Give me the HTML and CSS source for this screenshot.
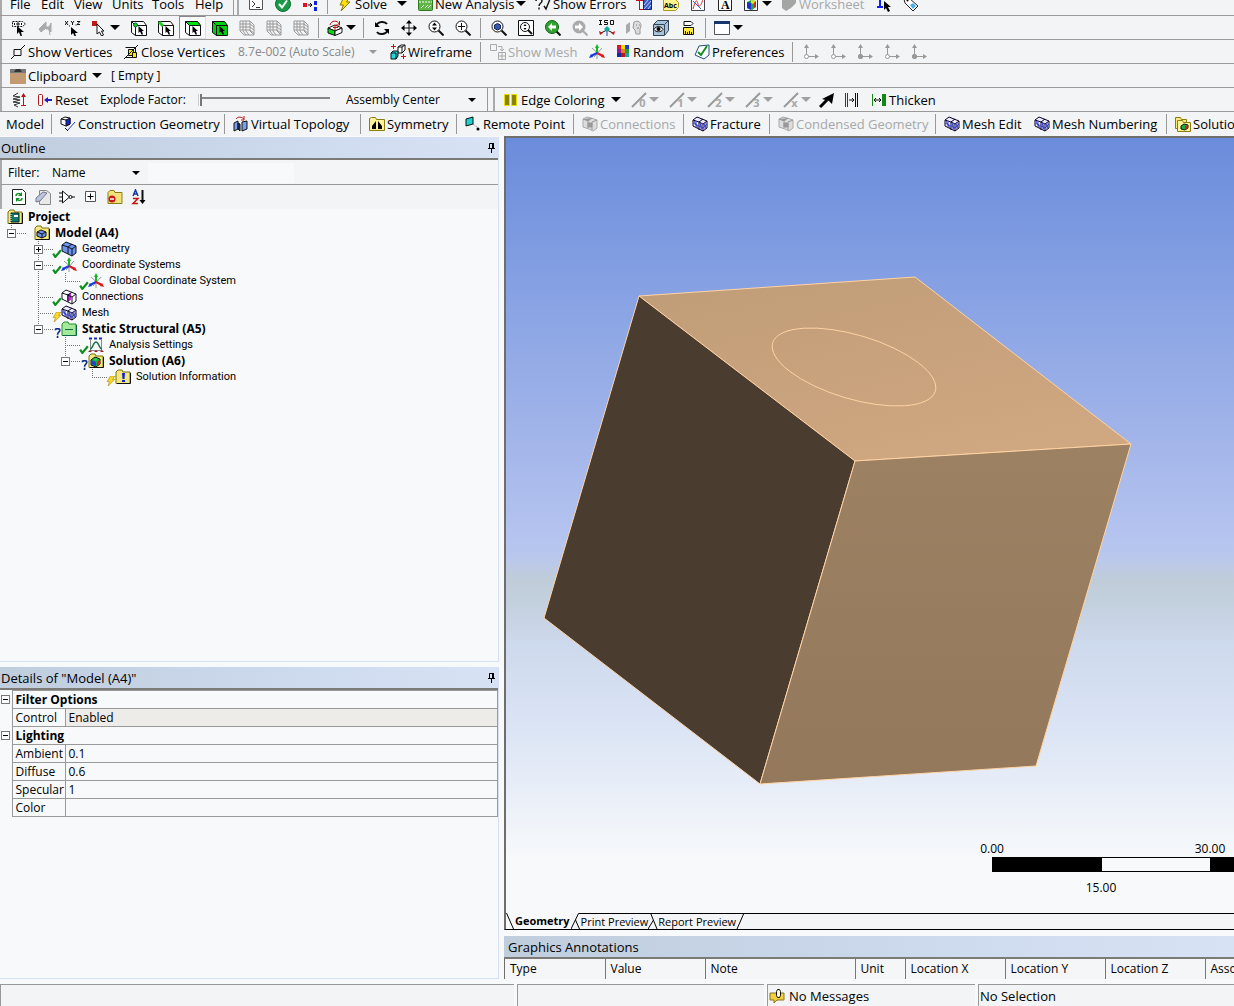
FILE: index.html
```html
<!DOCTYPE html>
<html lang="en">
<head>
    <meta charset="UTF-8">
    <meta name="viewport" content="width=device-width, initial-scale=1.0">
    <title>Mechanical</title>
    <link rel="stylesheet" href="styles.css">
</head>
<body>
    <!-- Icon set -->
    <svg class="sprite" width="0" height="0" aria-hidden="true">
        <symbol id="i-console" viewBox="0 0 16 16"><path d="M1.500 2.500h13v11h-13z" fill="#fff" stroke="#555"/><path d="M4 5l3 3-3 3M8 11.500h4" fill="none" stroke="#333"/></symbol>
        <symbol id="i-ok" viewBox="0 0 16 16"><circle cx="8" cy="8" r="7.500" fill="#1a9a48" stroke="#0b6c2e"/><path d="M4 8l3 3.500L12 4.500" fill="none" stroke="#fff" stroke-width="2"/></symbol>
        <symbol id="i-route" viewBox="0 0 16 16"><path d="M1 7h4v4H1z" fill="#e01020"/><path d="M6 9h4M8 7l2 2-2 2" fill="none" stroke="#000"/><path d="M12 5h3v4h-3zM12 11h3v4h-3z" fill="#1020e0"/></symbol>
        <symbol id="i-bolt" viewBox="0 0 16 16"><path d="M7 1h6L9.500 6H13L4 15l2.500-6H3z" fill="#ffe400" stroke="#8a7400"/></symbol>
        <symbol id="i-analysis" viewBox="0 0 16 16"><rect x="1.500" y="2.500" width="14" height="12" rx="1" fill="#5fb548" stroke="#2d7a1c"/><path d="M2 6h13" stroke="#fff" stroke-dasharray="2 1"/><path d="M4 12l3-3M8 12l3-3M11 12l3-3" stroke="#e6f8df"/></symbol>
        <symbol id="i-errors" viewBox="0 0 16 16"><path d="M1 5c0-3 6-3 6 0 0 2-3 2-3 5M4 11.500v2M9 10l2 3 4-10" fill="none" stroke="#111" stroke-width="1.400"/></symbol>
        <symbol id="i-section" viewBox="0 0 16 16"><path d="M0 4.500h7M3.500 4v9M3 13.500h6" stroke="#c01020" fill="none"/><path d="M7.500 3.500h8v10h-8z" fill="#3c5ac8" stroke="#102080"/><path d="M8 13l7-8M8 9l4-5M12 13l3-4" stroke="#bcd0ff"/></symbol>
        <symbol id="i-abc" viewBox="0 0 16 16"><path d="M.5 3.500h12l3 3v5l-3 3H.5z" fill="#fff38a" stroke="#b09a20"/><text x="1" y="12" class="glyph">Abc</text></symbol>
        <symbol id="i-figure" viewBox="0 0 16 16"><path d="M1.500 1.500h13v13h-13z" fill="#fff" stroke="#445"/><path d="M3 13C6 2 7 4 8 8s3 2 5-5" fill="none" stroke="#d03030"/><path d="M3 5l8 8" stroke="#4060d0"/></symbol>
        <symbol id="i-image" viewBox="0 0 16 16"><path d="M1.500 1.500h13v13h-13z" fill="#fff" stroke="#222"/><text x="4" y="13" class="glyph glyph-a">A</text></symbol>
        <symbol id="i-contour" viewBox="0 0 16 16"><path d="M1.500 1.500h13v13h-13z" fill="#fff" stroke="#333"/><path d="M4 6l4-2 5 1v6l-4 3-5-2z" fill="#18a848"/><path d="M4 6l4 1v7l-4-2z" fill="#2030d0"/><path d="M8 4l5 1-3 3-2-1z" fill="#e8e020"/><path d="M11 7l2-2v6l-2 1z" fill="#e02020"/></symbol>
        <symbol id="i-worksheet" viewBox="0 0 16 16"><path d="M1 2h14v5l-5 5-5 3-4-3z" fill="#a5a5a5"/></symbol>
        <symbol id="i-onepick" viewBox="0 0 16 16"><path d="M2 3l2-1v9M1 11h6" fill="none" stroke="#1020ff" stroke-width="2"/><path d="M8 5v9l2-2 2 4 2-1-2-4h3z"/></symbol>
        <symbol id="i-tag" viewBox="0 0 16 16"><path d="M1 3l5-1 9 8-5 5-8-8z" fill="#fff" stroke="#222"/><path d="M7 9l3-2 3 3-3 3z" fill="#48b0f0"/><circle cx="4.500" cy="4.500" r="1"/></symbol>

        <symbol id="i-pick" viewBox="0 0 16 16"><path d="M1.500 1.500h10l3 2.500-3 2.500h-10z" fill="#fff" stroke="#111" stroke-dasharray="2 1"/><path d="M3.500 3v2M6 3h2v2H6zM10.500 3v2" stroke="#111" fill="none"/><path d="M6 6v8l2-2 1.500 4h1.500l-1-4h3z"/></symbol>
        <symbol id="i-pickoff" viewBox="0 0 16 16"><path d="M1 9l7-7v5h3l2-4v9l-3-3H8v-1l-5 4zM11 9l1 6" fill="#aaa" stroke="#aaa"/></symbol>
        <symbol id="i-xyz" viewBox="0 0 16 16"><path d="M0 1l3 4M3 1L0 5M6 1l1.500 2L9 1M7.500 3v2M12 1.500h3l-3 3h3" fill="none" stroke="#111"/><path d="M4 6h1M10.500 5h1" stroke="#111"/><path d="M6 7v8l2-2 1.500 3H11l-1-3h3z"/></symbol>
        <symbol id="i-select" viewBox="0 0 16 16"><path d="M1 1h5v5H1z" fill="#c01818"/><path d="M6 4v10l2.500-2 2 4 2-1-2-4H13z" fill="#fff" stroke="#111"/></symbol>
        <symbol id="i-vertex" viewBox="0 0 16 16"><use href="#i-box"/><circle cx="4.500" cy="5" r="2" fill="#1ad020" stroke="#064"/><use href="#i-arrow"/></symbol>
        <symbol id="i-edge" viewBox="0 0 16 16"><use href="#i-box"/><path d="M1 2l4 4" stroke="#1ad020" stroke-width="3"/><use href="#i-arrow"/></symbol>
        <symbol id="i-face" viewBox="0 0 16 16"><use href="#i-box"/><path d="M.5 1.500h12l3 4h-11z" fill="#00e010" stroke="#111"/><use href="#i-arrow"/></symbol>
        <symbol id="i-body" viewBox="0 0 16 16"><path d="M.5 1.500h12l3 4v10h-11l-4-3z" fill="#00d010" stroke="#111"/><path d="M.5 1.500l4 4h11M4.500 5.500v10" fill="none" stroke="#111"/><use href="#i-arrow"/></symbol>
        <symbol id="i-box" viewBox="0 0 16 16"><path d="M.5 1.500h12l3 4v10h-11l-4-3z" fill="#fff" stroke="#111"/><path d="M.5 1.500l4 4h11M4.500 5.500v10" fill="none" stroke="#111"/></symbol>
        <symbol id="i-arrow" viewBox="0 0 16 16"><path d="M7.500 6v7l1.500-1.500 1.500 3h1.500l-1-3.500h2z"/></symbol>
        <symbol id="i-mesh-off" viewBox="0 0 16 16"><path d="M1 1h10l4 4v10H5l-4-4z" fill="#f4f4f4" stroke="#999"/><path d="M1 4h10l4 3M1 7h10l4 3M1 10h10l4 3M4 1v10l3 4M7 1v10l3 4M11 1v10l4 4" fill="none" stroke="#999"/></symbol>
        <symbol id="i-view" viewBox="0 0 16 16"><path d="M1 8l7-3 7 3-7 3z" fill="#fff" stroke="#111"/><path d="M1 8l7 3v4.500L1 13z" fill="#00d818" stroke="#111"/><path d="M15 8l-7 3v4.500l7-3z" fill="#fff" stroke="#111"/><path d="M3 5c1-5 8-5 9-1M12.500 1v4H9M8 5v5M6 7.500h5" fill="none" stroke="#c01010"/></symbol>
        <symbol id="i-rotate" viewBox="0 0 16 16"><path d="M2 6c2-5 9-5 11-2M14 10c-2 5-9 5-11 2" fill="none" stroke="#111" stroke-width="2"/><path d="M1 2v5h5zM15 14V9h-5z"/></symbol>
        <symbol id="i-pan" viewBox="0 0 16 16"><path d="M8 2v12M2 8h12" stroke="#111"/><path d="M8 0l3 3.500H5zM8 16l3-3.500H5zM0 8l3.500-3v6zM16 8l-3.500-3v6z"/></symbol>
        <symbol id="i-lens" viewBox="0 0 16 16"><circle cx="6.500" cy="6.500" r="5.500" fill="#fff" stroke="#111"/><path d="M10.500 10.500l5 5" stroke="#111" stroke-width="2"/></symbol>
        <symbol id="i-zoom" viewBox="0 0 16 16"><use href="#i-lens"/><path d="M6.500 2.500l2.500 3H4zM6.500 10.500l2.500-3H4z"/></symbol>
        <symbol id="i-zoomin" viewBox="0 0 16 16"><use href="#i-lens"/><path d="M3 6.500h7M6.500 3v7" stroke="#111"/></symbol>
        <symbol id="i-fit" viewBox="0 0 16 16"><use href="#i-lens"/><path d="M3.500 5l3-1.500 3 1.500v3.500l-3 1.500-3-1.500z" fill="#3458b8" stroke="#102050"/></symbol>
        <symbol id="i-zoombox" viewBox="0 0 16 16"><path d="M.5.500h15v15H.5z" fill="#fff" stroke="#111"/><circle cx="7" cy="7" r="4.500" fill="#fff" stroke="#111"/><path d="M10 10l4 4" stroke="#111" stroke-width="2"/><path d="M7 4l1.500 2h-3zM7 10l1.500-2h-3z"/></symbol>
        <symbol id="i-back" viewBox="0 0 16 16"><path d="M10.500 10.500l5 5" stroke="#111" stroke-width="2"/><circle cx="7" cy="7" r="6.500" fill="#30a030" stroke="#176017"/><path d="M3 7l4-4v2.500h4v3H7V11z" fill="#fff"/></symbol>
        <symbol id="i-fwd" viewBox="0 0 16 16"><path d="M10.500 10.500l5 5" stroke="#aaa" stroke-width="2"/><circle cx="7" cy="7" r="6.500" fill="#aaa"/><path d="M11 7L7 3v2.500H3v3h4V11z" fill="#fff"/></symbol>
        <symbol id="i-iso" viewBox="0 0 16 16"><path d="M1.500 0v5M0 .5h3M0 4.500h3M9 .5H5.500v2H8.500v2H5M11.500.5h3v4h-3z" fill="none" stroke="#111"/><path d="M8 16V8" stroke="#1040c0"/><path d="M8 10l-6 3M8 10l6 3" stroke="#111"/><path d="M5 9l3-3 3 3-3 3z" fill="#10a8a0"/><path d="M0 11l4 2-3 2zM16 11l-4 2 3 2z" fill="#c01818"/></symbol>
        <symbol id="i-lookat" viewBox="0 0 16 16"><path d="M0 5l4-3v9l-4 3z" fill="#aaa"/><path d="M8 2c4-2 7 0 7 4l-1 3v5h-4l-1-4-2-2z" fill="#ddd" stroke="#999"/><path d="M10 5h1M13 5h1M11 8h2" stroke="#888"/></symbol>
        <symbol id="i-eye" viewBox="0 0 16 16"><path d="M.5 4.500l4-4h11v10l-4 5H.5z" fill="#a9c3dd" stroke="#345"/><path d="M11.500 15V4.500l4-4M1 4.500h10" fill="none" stroke="#345"/><path d="M1 9.500c2-4 7-4 9 0-2 3-7 3-9 0z" fill="#fff" stroke="#111"/><circle cx="5.500" cy="9" r="2"/></symbol>
        <symbol id="i-ruler" viewBox="0 0 16 16"><path d="M4 1.500h7l2 2-2 2H4z" fill="#fff" stroke="#111"/><path d="M3.500 7.500h10v7h-10z" fill="#ffe840" stroke="#111"/><path d="M5.500 11v3M7.500 12v2M9.500 11v3M11.500 12v2" stroke="#111"/></symbol>
        <symbol id="i-window" viewBox="0 0 16 16"><path d="M.5 1.500h15v13H.5z" fill="#fff" stroke="#555"/><path d="M0 1h16v3H0z" fill="#16366e"/></symbol>

        <symbol id="i-showv" viewBox="0 0 16 16"><path d="M4 5.500h7v6H4zM11 5l4-4M4 12l-3 3" fill="none" stroke="#111"/></symbol>
        <symbol id="i-closev" viewBox="0 0 16 16"><path d="M2.500 3.500h10v9M2 13.500h8" fill="none" stroke="#111"/><path d="M5.500 5.500h5v6h-5z" fill="#ffe800" stroke="#111"/><path d="M9.500 8.500h4v5h-4z" fill="#ffe800" stroke="#111"/><path d="M1 15L15 1" stroke="#111"/></symbol>
        <symbol id="i-wire" viewBox="0 0 16 16"><path d="M8 3l3-2h4v5l-3 3H8zM8 3h4v6M12 3l3-2" fill="#fff" stroke="#111"/><path d="M1 9l2-2h5v5l-2 3H1z" fill="#20d8e0" stroke="#111"/><path d="M1 9h5v6" fill="none" stroke="#111"/><path d="M3.500 0v5M1 2.500h5M13.500 10v5M11 12.500h5" stroke="#c01818"/></symbol>
        <symbol id="i-showmesh" viewBox="0 0 16 16"><path d="M.5.500h6v6h-6zM8 2.500h4v4M10 5l2 2 2-2M8.500 8.500h7v7h-7zM12 8v8M8 12h8" fill="none" stroke="#aaa"/></symbol>
        <symbol id="i-triad" viewBox="0 0 16 16"><path d="M3 4l10 9M13 4L5 13M8 9v6" stroke="#999"/><path d="M8 9V2" stroke="#10b820" stroke-width="2"/><path d="M8 0l2 4H6z" fill="#10b820"/><path d="M8 9l-6 3" stroke="#1838e0" stroke-width="2"/><path d="M0 14l2-4 2 3z" fill="#1838e0"/><path d="M8 9l6 3" stroke="#e01818" stroke-width="2"/><path d="M16 14l-2-4-2 3z" fill="#e01818"/></symbol>
        <symbol id="i-random" viewBox="0 0 16 16"><path d="M2 1h4v4H2z" fill="#d81830"/><path d="M6 1h4v4H6z" fill="#f0e000"/><path d="M10 1h4v4h-4z" fill="#2038e0"/><path d="M2 5h4v4H2z" fill="#901890"/><path d="M6 5h4v4H6z" fill="#e88020"/><path d="M10 5h4v4h-4z" fill="#20a030"/><path d="M2 9h4v4H2z" fill="#1828a0"/><path d="M6 9h4v4H6z" fill="#c01818"/><path d="M10 9h4v4h-4z" fill="#18a8a0"/></symbol>
        <symbol id="i-prefs" viewBox="0 0 16 16"><path d="M5 2l10-1v10l-5 4-9-4z" fill="#fff" stroke="#205080"/><path d="M4 8l3 3 6-9" fill="none" stroke="#109020" stroke-width="2"/></symbol>
        <symbol id="i-axes" viewBox="0 0 16 16"><path d="M3.500 13V2M4 12.500h10" stroke="#999" fill="none"/><path d="M3.500 0L6 4H1zM16 12.500L12 10v5z" fill="#999"/><circle cx="3.500" cy="12.500" r="2" fill="#fff" stroke="#999"/></symbol>
        <symbol id="i-axes-dot" viewBox="0 0 16 16"><use href="#i-axes"/><circle cx="3.500" cy="12.500" r="2.500" fill="#999"/></symbol>

        <symbol id="i-clip" viewBox="0 0 16 16"><path d="M0 2h16v14H0z" fill="#c49a72"/><path d="M0 1h16v4H0z" fill="#777"/><path d="M4 4l2-3h4l2 3z" fill="#333"/></symbol>
        <symbol id="i-spring" viewBox="0 0 16 16"><path d="M7 1L2 4l7 1-7 2 7 1-7 2 7 1-6 2 4 2" fill="none" stroke="#333"/><path d="M12.500 3v11M10 13.500h5" stroke="#b01818"/><path d="M12.500 1L15 5h-5z" fill="#b01818"/></symbol>
        <symbol id="i-reset" viewBox="0 0 16 16"><rect x="1.500" y="2.500" width="4" height="11" rx="1" fill="#fff" stroke="#b01818"/><path d="M9 8h6" stroke="#2020b0" stroke-width="2"/><path d="M7 8l4-3v6z" fill="#2020b0"/></symbol>
        <symbol id="i-coloring" viewBox="0 0 16 16"><path d="M1.500 2.500h5v11h-5zM8.500 2.500h5v11h-5z" fill="#8a8200" stroke="#e8e000"/></symbol>
        <symbol id="i-thick" viewBox="0 0 16 16"><path d="M1 15L15 1" stroke="#999" stroke-width="2"/></symbol>
        <symbol id="i-direct" viewBox="0 0 16 16"><path d="M1 15l7-7" stroke="#000" stroke-width="3"/><path d="M15 1l-2 11-3-3-7-2z"/></symbol>
        <symbol id="i-annot" viewBox="0 0 16 16"><path d="M1.500 1v14M3.500 1v14" stroke="#a01010"/><path d="M11.500 1v14M13.500 1v14M5 8h5M8 6l2 2-2 2" fill="none" stroke="#111"/></symbol>
        <symbol id="i-thicken" viewBox="0 0 16 16"><path d="M1.500 2v12" stroke="#108a10"/><path d="M11 2h4v12h-4z" fill="#108a10"/><path d="M3 8h7M5 6L3 8l2 2M8 6l2 2-2 2" fill="none" stroke="#111"/></symbol>

        <symbol id="i-constr" viewBox="0 0 16 16"><path d="M1 3l4-2 5 1v6l-4 2-5-2z" fill="#fff" stroke="#111"/><path d="M6 4l4-2v6l-4 2z" fill="#1828d8" stroke="#111"/><path d="M1 3l5 1" stroke="#111"/><path d="M7 15l8-9" stroke="#2038c0"/><path d="M5 12l3 3" stroke="#111"/></symbol>
        <symbol id="i-virtual" viewBox="0 0 16 16"><path d="M1 7l4-2v8l-4 2zM9 6l5-1v8l-5 2z" fill="#7aa0e8" stroke="#111"/><path d="M5 7l2 1v7l-2-2z" fill="#1a3fa0" stroke="#111"/><path d="M3 3c2-3 6-2 8 0M11 0v4H8" fill="none" stroke="#c01818"/></symbol>
        <symbol id="i-symm" viewBox="0 0 16 16"><path d="M.5 14.500v-12l2-1h4l1 2h8v11z" fill="#fff39a" stroke="#8a7c10"/><path d="M7 5v8H3v-3zM9 5v8h4v-3z"/></symbol>
        <symbol id="i-remote" viewBox="0 0 16 16"><path d="M1 3l7-2v7l-7 2z" fill="#20d0d0" stroke="#111"/><path d="M8 8l5 4" stroke="#777" stroke-dasharray="1 1"/><circle cx="13" cy="13" r="1.500"/></symbol>
        <symbol id="i-grey-cubes" viewBox="0 0 16 16"><path d="M1 3l4-2 4 1 6 2v8l-4 3-4-2-6-2z" fill="#ddd" stroke="#aaa"/><path d="M1 3l5 2 4-3M6 5v7M10 6l5-2M10 6v8M6 7h4v4H6z" fill="#999" stroke="#999"/></symbol>
        <symbol id="i-mesh" viewBox="0 0 16 16"><path d="M1 4l4-3 5 2 5 2v7l-4 3-4-2-6-3z" fill="#e8ecff" stroke="#102"/><path d="M1 4l6 2v8M7 6l4-3M11 15V8L7 6M11 8l4-3" fill="none" stroke="#102"/><path d="M1 7l6 3 4 2 4-4M4 5v6M9 7v7M13 6v7M2 5l4 7M8 7l2 6M12 8l2 4" stroke="#3440c8" fill="none"/></symbol>
        <symbol id="i-solution" viewBox="0 0 16 16"><path d="M.5 1.500h5l1 2h5v9H.5z" fill="#f7ec74" stroke="#8a7c10"/><path d="M2.500 15.500v-11h5l1 2h7v9z" fill="#fff39a" stroke="#8a7c10"/><path d="M6 10l3-2 4 1v3l-3 2-4-1z" fill="#18b040" stroke="#111"/><path d="M10 10l3-1v3l-3 2z" fill="#d02020"/></symbol>

        <symbol id="i-refresh" viewBox="0 0 16 16"><path d="M1.500.500h10l3 3v12h-13z" fill="#fff" stroke="#222"/><path d="M5 7c0-3 4-3 5-1M11 9c0 3-4 3-5 1" fill="none" stroke="#109020" stroke-width="1.500"/><path d="M11 3v4H7zM5 13V9h4z" fill="#109020"/></symbol>
        <symbol id="i-eraser" viewBox="0 0 16 16"><path d="M4.500 1.500h7l4 3v11h-11z" fill="#e8e8e8" stroke="#888"/><path d="M1 9l7-6 4 1-7 8-4 1z" fill="#b8c4e0" stroke="#778"/></symbol>
        <symbol id="i-gate" viewBox="0 0 16 16"><path d="M3.500 2v12l7-6zM0 8h4M13 8h3M0 4h4M0 12h4" fill="#fff" stroke="#111"/><circle cx="11.500" cy="8" r="1.500" fill="#fff" stroke="#111"/></symbol>
        <symbol id="i-expand" viewBox="0 0 16 16"><path d="M2.500 2.500h10v10h-10z" fill="#fff" stroke="#555"/><path d="M4.500 7.500h6M7.500 4.500v6" stroke="#000"/></symbol>
        <symbol id="i-hide" viewBox="0 0 16 16"><path d="M1 3.500l2-2h4l1 2h7v11H1z" fill="#f3e27c" stroke="#8a7c10"/><circle cx="5" cy="10" r="3.500" fill="#c81818"/><path d="M3 10h4" stroke="#fff" stroke-width="1.500"/></symbol>
        <symbol id="i-sort" viewBox="0 0 16 16"><path d="M2 7l2.500-6L7 7M3 5h3" fill="none" stroke="#1838a0" stroke-width="1.500"/><path d="M2 9.500h5l-5 5h5" fill="none" stroke="#c01818" stroke-width="1.500"/><path d="M11.500 1v12" stroke="#111" stroke-width="2"/><path d="M8.500 11h6l-3 4z"/></symbol>
        <symbol id="i-pin" viewBox="0 0 10 10"><path d="M2.500 5V.500h4V5M1 5.500h7M4.500 6v4" fill="none" stroke="#000"/><path d="M5 0h2v5H5z"/></symbol>

        <symbol id="i-folder" viewBox="0 0 16 16"><path d="M1 14.500V3l2-2h4l1 2h7v11.500z" fill="#f5e97d" stroke="#7c7010"/><path d="M2 14.500h13.500V4" fill="none" stroke="#111"/></symbol>
        <symbol id="i-project" viewBox="0 0 16 16"><use href="#i-folder"/><path d="M4 4h8v9H4z" fill="#107a70" stroke="#022"/><path d="M7 6h4v2H7z" fill="#fff"/><path d="M4 5v8" stroke="#fff" stroke-dasharray="1 1"/></symbol>
        <symbol id="i-model" viewBox="0 0 16 16"><use href="#i-folder"/><path d="M3 7l4-2 5 2v4l-4 2-5-2z" fill="#6d95ea" stroke="#112"/><path d="M3 7l5 2 4-2M8 9v4" fill="none" stroke="#112"/></symbol>
        <symbol id="i-geom" viewBox="0 0 16 16"><path d="M1 4l4-3 5 2 5 2v7l-4 3-4-2-6-3z" fill="#6d95ea" stroke="#112"/><path d="M1 4l6 2v7M7 6l4-3M11 15V8L7 6M11 8l4-3" fill="none" stroke="#112"/></symbol>
        <symbol id="i-conn" viewBox="0 0 16 16"><path d="M1 4l4-3 5 2 5 2v7l-4 3-4-2-6-3z" fill="#fff" stroke="#112"/><path d="M6 5l4-1v7l-4 2z" fill="#c828d8"/><path d="M1 4l6 2v7M7 6l4-3M11 15V8L7 6M11 8l4-3" fill="none" stroke="#112"/></symbol>
        <symbol id="i-static" viewBox="0 0 16 16"><path d="M1 14.500V3l2-2h4l1 2h7v11.500z" fill="#a5ea9c" stroke="#2a8a2a"/><path d="M2 14.500h13.500V4" fill="none" stroke="#164"/><path d="M4 8.500h8" stroke="#164"/></symbol>
        <symbol id="i-settings" viewBox="0 0 16 16"><path d="M1 1.500h14" stroke="#1828a8" stroke-width="2" stroke-dasharray="3 2"/><path d="M2.500 3v11M13.500 3v11M2 13.500h12" stroke="#888"/><path d="M2 12c3 0 3-7 6-7s3 7 6 7" fill="none" stroke="#207048" stroke-width="1.500"/><path d="M0 15l2-2 2 2zM6 15l2-2 2 2zM12 15l2-2 2 2z" fill="#a02020"/></symbol>
        <symbol id="i-solve" viewBox="0 0 16 16"><use href="#i-folder"/><path d="M3 7l4-3 5 2v5l-4 3-5-2z" fill="#18a848" stroke="#111"/><path d="M3 7l5 2v4l-5-2z" fill="#2040d0"/><path d="M9 9l3-2v4l-3 2z" fill="#e02020"/><path d="M5 6l3-1 2 1-2 2z" fill="#30d040"/></symbol>
        <symbol id="i-info" viewBox="0 0 16 16"><use href="#i-folder"/><path d="M7 4h3l-.5 6h-2zM7 11h3v2H7z" fill="#1020e0"/></symbol>
        <symbol id="b-check" viewBox="0 0 9 9"><path d="M1 5l2 3 5-6" fill="none" stroke="#10901c" stroke-width="2"/></symbol>
        <symbol id="b-bolt" viewBox="0 0 9 9"><path d="M4 0h4L6 3h2L2 9l1-4H1z" fill="#ffd820" stroke="#a08010" stroke-width=".5"/></symbol>
        <symbol id="b-query" viewBox="0 0 9 9"><path d="M3 2c0-2 4-2 4 0s-2 1.500-2 4M5 7v2" fill="none" stroke="#10308a" stroke-width="1.500"/></symbol>
        <symbol id="i-message" viewBox="0 0 16 16"><path d="M1 5h14v7H8l-3 3v-3H1z" fill="#f2cf3c" stroke="#8a7420"/><path d="M8.500 1.500h2l1 2v4l-1 2h-2l-1-2v-4z" fill="#fff8d0" stroke="#111"/></symbol>
    </svg>

    <header class="toolbars">
        <div class="bar bar-first">
            <nav class="menu">
                <button>File</button><button>Edit</button><button>View</button><button>Units</button><button>Tools</button><button>Help</button>
            </nav>
            <div class="tools tools-solve">
                <button class="tool" aria-label="Command"><svg><use href="#i-console"/></svg></button>
                <button class="tool" aria-label="Ready"><svg><use href="#i-ok"/></svg></button>
                <button class="tool" aria-label="Route"><svg><use href="#i-route"/></svg></button>
                <i class="sep"></i>
                <button class="tool text drop"><svg><use href="#i-bolt"/></svg>Solve</button>
                <button class="tool text drop"><svg><use href="#i-analysis"/></svg>New Analysis</button>
                <button class="tool text"><svg><use href="#i-errors"/></svg>Show Errors</button>
                <button class="tool" aria-label="Section"><svg><use href="#i-section"/></svg></button>
                <button class="tool" aria-label="Label"><svg><use href="#i-abc"/></svg></button>
                <button class="tool" aria-label="Figure"><svg><use href="#i-figure"/></svg></button>
                <button class="tool" aria-label="Image"><svg><use href="#i-image"/></svg></button>
                <button class="tool drop" aria-label="Contour"><svg><use href="#i-contour"/></svg></button>
                <button class="tool text" disabled><svg><use href="#i-worksheet"/></svg>Worksheet</button>
                <button class="tool" aria-label="Pick one"><svg><use href="#i-onepick"/></svg></button>
                <button class="tool" aria-label="Tag"><svg><use href="#i-tag"/></svg></button>
            </div>
        </div>

        <div class="bar">
            <div class="tools tools-view">
                <button class="tool" aria-label="Label pick"><svg><use href="#i-pick"/></svg></button>
                <button class="tool" aria-label="Direction" disabled><svg><use href="#i-pickoff"/></svg></button>
                <button class="tool" aria-label="Hit point"><svg><use href="#i-xyz"/></svg></button>
                <button class="tool drop" aria-label="Select mode"><svg><use href="#i-select"/></svg></button>
                <button class="tool" aria-label="Vertex"><svg><use href="#i-vertex"/></svg></button>
                <button class="tool" aria-label="Edge"><svg><use href="#i-edge"/></svg></button>
                <button class="tool pressed" aria-label="Face"><svg><use href="#i-face"/></svg></button>
                <button class="tool" aria-label="Body"><svg><use href="#i-body"/></svg></button>
                <button class="tool" aria-label="Nodes" disabled><svg><use href="#i-mesh-off"/></svg></button>
                <button class="tool" aria-label="Element faces" disabled><svg><use href="#i-mesh-off"/></svg></button>
                <button class="tool" aria-label="Elements" disabled><svg><use href="#i-mesh-off"/></svg></button>
                <i class="sep"></i>
                <button class="tool drop" aria-label="Extend"><svg><use href="#i-view"/></svg></button>
                <i class="sep"></i>
                <button class="tool" aria-label="Rotate"><svg><use href="#i-rotate"/></svg></button>
                <button class="tool" aria-label="Pan"><svg><use href="#i-pan"/></svg></button>
                <button class="tool" aria-label="Zoom"><svg><use href="#i-zoom"/></svg></button>
                <button class="tool" aria-label="Zoom in"><svg><use href="#i-zoomin"/></svg></button>
                <i class="sep"></i>
                <button class="tool" aria-label="Fit"><svg><use href="#i-fit"/></svg></button>
                <button class="tool" aria-label="Box zoom"><svg><use href="#i-zoombox"/></svg></button>
                <button class="tool" aria-label="Previous view"><svg><use href="#i-back"/></svg></button>
                <button class="tool" aria-label="Next view" disabled><svg><use href="#i-fwd"/></svg></button>
                <button class="tool" aria-label="ISO"><svg><use href="#i-iso"/></svg></button>
                <button class="tool" aria-label="Look at" disabled><svg><use href="#i-lookat"/></svg></button>
                <button class="tool" aria-label="Manage views"><svg><use href="#i-eye"/></svg></button>
                <button class="tool" aria-label="Ruler"><svg><use href="#i-ruler"/></svg></button>
                <i class="sep"></i>
                <button class="tool drop" aria-label="Viewports"><svg><use href="#i-window"/></svg></button>
            </div>
        </div>

        <div class="bar">
            <div class="tools tools-display">
                <button class="tool text"><svg><use href="#i-showv"/></svg>Show Vertices</button>
                <button class="tool text"><svg><use href="#i-closev"/></svg>Close Vertices</button>
                <span class="pick pick-scale"><select aria-label="Vertex scale" disabled><option>8.7e-002 (Auto Scale)</option></select></span>
                <button class="tool text"><svg><use href="#i-wire"/></svg>Wireframe</button>
                <i class="sep"></i>
                <button class="tool text" disabled><svg><use href="#i-showmesh"/></svg>Show Mesh</button>
                <button class="tool" aria-label="Triad"><svg><use href="#i-triad"/></svg></button>
                <button class="tool text"><svg><use href="#i-random"/></svg>Random</button>
                <button class="tool text"><svg><use href="#i-prefs"/></svg>Preferences</button>
                <i class="sep"></i>
                <button class="tool" aria-label="Axis 1" disabled><svg><use href="#i-axes"/></svg></button>
                <button class="tool" aria-label="Axis 2" disabled><svg><use href="#i-axes"/></svg></button>
                <button class="tool" aria-label="Axis 3" disabled><svg><use href="#i-axes-dot"/></svg></button>
                <button class="tool" aria-label="Axis 4" disabled><svg><use href="#i-axes"/></svg></button>
                <button class="tool" aria-label="Axis 5" disabled><svg><use href="#i-axes-dot"/></svg></button>
            </div>
        </div>

        <div class="bar">
            <div class="tools tools-clip">
                <button class="tool text drop"><svg><use href="#i-clip"/></svg>Clipboard</button>
                <span class="small">[ Empty ]</span>
            </div>
        </div>

        <div class="bar">
            <div class="tools tools-explode">
                <button class="tool" aria-label="Explode"><svg><use href="#i-spring"/></svg></button>
                <button class="tool text"><svg><use href="#i-reset"/></svg>Reset</button>
                <label class="small" for="explode">Explode Factor:</label>
                <input type="range" id="explode" min="0" max="10" value="0">
                <span class="pick"><select aria-label="Explode origin"><option>Assembly Center</option></select></span>
            </div>
            <div class="tools tools-edges">
                <button class="tool text drop"><svg><use href="#i-coloring"/></svg>Edge Coloring</button>
                <button class="tool drop num" disabled><svg><use href="#i-thick"/></svg><span>0</span></button>
                <button class="tool drop num" disabled><svg><use href="#i-thick"/></svg><span>1</span></button>
                <button class="tool drop num" disabled><svg><use href="#i-thick"/></svg><span>2</span></button>
                <button class="tool drop num" disabled><svg><use href="#i-thick"/></svg><span>3</span></button>
                <button class="tool drop num" disabled><svg><use href="#i-thick"/></svg><span>x</span></button>
                <button class="tool" aria-label="Edge direction"><svg><use href="#i-direct"/></svg></button>
                <button class="tool" aria-label="Annotations"><svg><use href="#i-annot"/></svg></button>
                <button class="tool text"><svg><use href="#i-thicken"/></svg>Thicken</button>
            </div>
        </div>

        <div class="bar context">
            <span class="context-name">Model</span>
            <button class="tool text"><svg><use href="#i-constr"/></svg>Construction Geometry</button>
            <button class="tool text"><svg><use href="#i-virtual"/></svg>Virtual Topology</button>
            <button class="tool text"><svg><use href="#i-symm"/></svg>Symmetry</button>
            <button class="tool text"><svg><use href="#i-remote"/></svg>Remote Point</button>
            <button class="tool text" disabled><svg><use href="#i-grey-cubes"/></svg>Connections</button>
            <button class="tool text"><svg><use href="#i-mesh"/></svg>Fracture</button>
            <button class="tool text" disabled><svg><use href="#i-grey-cubes"/></svg>Condensed Geometry</button>
            <button class="tool text joined"><svg><use href="#i-mesh"/></svg>Mesh Edit</button>
            <button class="tool text"><svg><use href="#i-mesh"/></svg>Mesh Numbering</button>
            <button class="tool text"><svg><use href="#i-solution"/></svg>Solution</button>
        </div>
    </header>

    <main class="workspace">
        <div class="side">
            <section class="panel outline">
                <h2 class="title">Outline <button aria-label="Pin outline"><svg><use href="#i-pin"/></svg></button></h2>
                <div class="filter">
                    <label for="filter">Filter:</label>
                    <span class="pick"><select id="filter"><option>Name</option></select></span>
                    <input type="text" aria-label="Filter text">
                </div>
                <div class="tree-tools">
                    <button aria-label="Refresh"><svg><use href="#i-refresh"/></svg></button>
                    <button aria-label="Clear"><svg><use href="#i-eraser"/></svg></button>
                    <button aria-label="Remove filter"><svg><use href="#i-gate"/></svg></button>
                    <button aria-label="Expand all"><svg><use href="#i-expand"/></svg></button>
                    <button aria-label="Hide folders"><svg><use href="#i-hide"/></svg></button>
                    <button aria-label="Sort"><svg><use href="#i-sort"/></svg></button>
                </div>
                <ul class="tree">
                    <li><span class="node"><svg><use href="#i-project"/></svg></span><b>Project</b></li>
                    <li><span class="guide end"><button class="toggle minus" aria-label="Collapse"></button></span><span class="node"><svg><use href="#i-model"/></svg></span><b>Model (A4)</b></li>
                    <li><span class="guide none"></span><span class="guide tee"><button class="toggle plus" aria-label="Expand"></button></span><span class="node"><svg><use href="#i-geom"/></svg><svg class="badge"><use href="#b-check"/></svg></span>Geometry</li>
                    <li><span class="guide none"></span><span class="guide tee"><button class="toggle minus" aria-label="Collapse"></button></span><span class="node"><svg><use href="#i-triad"/></svg><svg class="badge"><use href="#b-check"/></svg></span>Coordinate Systems</li>
                    <li><span class="guide none"></span><span class="guide line"></span><span class="guide end"></span><span class="node"><svg><use href="#i-triad"/></svg><svg class="badge"><use href="#b-check"/></svg></span>Global Coordinate System</li>
                    <li><span class="guide none"></span><span class="guide tee"></span><span class="node"><svg><use href="#i-conn"/></svg><svg class="badge"><use href="#b-check"/></svg></span>Connections</li>
                    <li><span class="guide none"></span><span class="guide tee"></span><span class="node"><svg><use href="#i-mesh"/></svg><svg class="badge"><use href="#b-bolt"/></svg></span>Mesh</li>
                    <li><span class="guide none"></span><span class="guide end"><button class="toggle minus" aria-label="Collapse"></button></span><span class="node"><svg><use href="#i-static"/></svg><svg class="badge"><use href="#b-query"/></svg></span><b>Static Structural (A5)</b></li>
                    <li><span class="guide none"></span><span class="guide none"></span><span class="guide tee"></span><span class="node"><svg><use href="#i-settings"/></svg><svg class="badge"><use href="#b-check"/></svg></span>Analysis Settings</li>
                    <li><span class="guide none"></span><span class="guide none"></span><span class="guide end"><button class="toggle minus" aria-label="Collapse"></button></span><span class="node"><svg><use href="#i-solve"/></svg><svg class="badge"><use href="#b-query"/></svg></span><b>Solution (A6)</b></li>
                    <li><span class="guide none"></span><span class="guide none"></span><span class="guide none"></span><span class="guide end"></span><span class="node"><svg><use href="#i-info"/></svg><svg class="badge"><use href="#b-bolt"/></svg></span>Solution Information</li>
                </ul>
            </section>

            <section class="panel details">
                <h2 class="title">Details of "Model (A4)" <button aria-label="Pin details"><svg><use href="#i-pin"/></svg></button></h2>
                <table>
                    <colgroup><col class="gutter-col"><col class="key-col"><col></colgroup>
                    <tr><td class="gutter"><button class="toggle minus" aria-label="Collapse"></button></td><th colspan="2">Filter Options</th></tr>
                    <tr><td class="gutter"></td><td>Control</td><td class="readonly">Enabled</td></tr>
                    <tr><td class="gutter"><button class="toggle minus" aria-label="Collapse"></button></td><th colspan="2">Lighting</th></tr>
                    <tr><td class="gutter"></td><td>Ambient</td><td>0.1</td></tr>
                    <tr><td class="gutter"></td><td>Diffuse</td><td>0.6</td></tr>
                    <tr><td class="gutter"></td><td>Specular</td><td>1</td></tr>
                    <tr><td class="gutter"></td><td>Color</td><td></td></tr>
                </table>
            </section>
        </div>

        <div class="graphics">
            <section class="viewport">
                <svg class="scene" viewBox="0 0 728 775" preserveAspectRatio="xMinYMin slice">
                    <defs>
                        <linearGradient id="top-face" x1="0" y1="0" x2=".6" y2="1"><stop offset="0" stop-color="#bf9c77"/><stop offset="1" stop-color="#cfa781"/></linearGradient>
                        <linearGradient id="right-face" x1="0" y1="0" x2="0" y2="1"><stop offset="0" stop-color="#9d8163"/><stop offset="1" stop-color="#94785b"/></linearGradient>
                    </defs>
                    <!-- block -->
                    <g stroke="#ffd3a3" stroke-linejoin="round">
                        <path d="M133 158L409 139L625 306L349 323Z" fill="url(#top-face)"/>
                        <path d="M133 158L349 323L254 646L38 480Z" fill="#4a3d2f"/>
                        <path d="M349 323L625 306L530 628L254 646Z" fill="url(#right-face)"/>
                        <circle r=".467" transform="matrix(138 -9 108 83 348 229)" fill="none" vector-effect="non-scaling-stroke"/>
                    </g>
                    <!-- scale ruler -->
                    <path d="M486 719h260v15H486z"/>
                    <path d="M596 720h108v13H596z" fill="#f7f9fb"/>
                    <g class="scale">
                        <text x="486" y="715">0.00</text>
                        <text x="704" y="715">30.00</text>
                        <text x="595" y="754">15.00</text>
                    </g>
                </svg>
            </section>
            <div class="views">
                <svg class="slant first" viewBox="0 0 8 16"><path d="M.5 0L7.500 16"/></svg>
                <button class="active">Geometry</button>
                <svg class="slant" viewBox="0 0 10 16"><path d="M0 16L7.500 .5H10M4.500 7L8.500 16"/></svg>
                <button>Print Preview</button>
                <svg class="slant" viewBox="0 0 10 16"><path d="M0 .5H10M0 16L5.500 7M2.500 0L9 16"/></svg>
                <button>Report Preview</button>
                <svg class="slant" viewBox="0 0 10 16"><path d="M0 .5H10M1 16L8 0"/></svg>
                <i class="rest"></i>
            </div>
            <section class="annotations">
                <h2 class="title">Graphics Annotations</h2>
                <div class="grid-head">
                    <table>
                        <tr><th>Type</th><th>Value</th><th class="note">Note</th><th class="unit">Unit</th><th>Location X</th><th>Location Y</th><th>Location Z</th><th>Association</th></tr>
                    </table>
                </div>
            </section>
        </div>
    </main>

    <footer class="status">
        <span></span>
        <span></span>
        <span><svg><use href="#i-message"/></svg>No Messages</span>
        <span>No Selection</span>
    </footer>
</body>
</html>
```
FILE: styles.css
```css
* {
    box-sizing: border-box;
}

body {
    margin: 0;
    height: 100vh;
    display: flex;
    flex-direction: column;
    overflow: hidden;
    background: #f7f9fb;
    color: #000;
    font-family: "Open Sans", "Noto Sans", sans-serif;
    font-size: 13px;
    line-height: 16px;
}

button, select, input {
    font: inherit;
    color: inherit;
    margin: 0;
    padding: 0;
    border: 0;
    background: none;
}

button {
    white-space: nowrap;
}

svg {
    width: 16px;
    height: 16px;
    flex: none;
}

.sprite {
    display: none;
}

.glyph {
    font-size: 7px;
    font-weight: bold;
}

.glyph-a {
    font-family: "Liberation Serif", serif;
    font-size: 12px;
}

/* toolbars */

.toolbars {
    flex: none;
    background: #f2f4f6;
    overflow: hidden;
}

.bar {
    display: flex;
    height: 24px;
    border-bottom: 1px solid #9c9a98;
}

.bar-first {
    margin-top: -8px;
}

.menu {
    display: grid;
    grid-template-columns: 31px 33px 38px 40px 43px 1fr;
    width: 234px;
    padding-left: 8px;
    border-left: 2px solid #aaa;
    border-right: 1px solid #999;
    margin-right: 3px;
}

.menu button {
    text-align: left;
}

.tools {
    display: grid;
    align-items: center;
    border-left: 2px solid #aaa;
    padding-left: 3px;
}

.tools-solve {
    grid-template-columns: repeat(3, 27px) 9px 80px 118px 100px repeat(4, 27px) 38px 94px 27px 27px;
}

.tools-view {
    grid-template-columns: repeat(3, 27px) 39px repeat(7, 27px) 9px 36px 9px repeat(4, 27px) 9px repeat(8, 27px) 9px 36px;
}

.tools-display {
    grid-template-columns: 113px 114px 153px 90px 10px 98px 27px 79px 98px 10px repeat(5, 27px);
}

.tools-clip {
    grid-template-columns: 102px auto;
}

.tools-explode {
    grid-template-columns: 27px 64px 102px 142px 144px;
    width: 488px;
    border-right: 1px solid #999;
}

.tools-edges {
    grid-template-columns: 128px repeat(5, 38px) 22px 28px 80px;
    margin-left: 5px;
}

.tool {
    display: flex;
    align-items: center;
    justify-content: center;
    height: 23px;
}

.tool.text {
    justify-content: flex-start;
    gap: 2px;
    padding-left: 5px;
}

.tool:disabled {
    color: #a8a8a8;
}

.drop::after {
    content: "";
    border: 5px solid transparent;
    border-top-color: #000;
    border-bottom: 0;
    margin-left: 3px;
}

.text.drop::after {
    margin: 0 5px 0 auto;
}

.drop:disabled::after {
    border-top-color: #a0a0a0;
}

.num {
    font-size: 11px;
    font-weight: bold;
}

.num span {
    margin-left: -8px;
    padding-top: 6px;
}

.pressed {
    border: 1px solid #888;
    border-right-color: #ddd;
    border-bottom-color: #ddd;
    background: #fbfbfd;
}

.sep {
    width: 1px;
    height: 20px;
    justify-self: center;
    background: #999;
}

.small {
    font-size: 12px;
    padding-left: 4px;
    white-space: nowrap;
}

.pick {
    display: flex;
    align-items: center;
    font-size: 12px;
}

.pick select {
    flex: 1;
    min-width: 0;
    padding-left: 6px;
    appearance: none;
    opacity: 1;
}

.pick::after {
    content: "";
    border: 4px solid transparent;
    border-top-color: #000;
    border-bottom: 0;
    margin: 0 8px 0 -16px;
    pointer-events: none;
}

.pick-scale {
    color: #888;
}

.pick-scale::after {
    border-top-color: #999;
}

input[type="range"] {
    appearance: none;
    width: 132px;
    height: 14px;
    background: linear-gradient(#888, #888) 0 4px / 100% 2px no-repeat;
}

input[type="range"]::-webkit-slider-thumb {
    appearance: none;
    width: 4px;
    height: 12px;
    background: #f7f9fb;
    border-right: 2px solid #777;
    border-left: 1px solid #ccc;
}

.context {
    display: grid;
    grid-template-columns: 52px 173px 136px 96px 117px 110px 86px 166px 90px 141px 100px;
    align-items: center;
    border-bottom: 0;
}

.context > * {
    height: 20px;
    border-right: 1px solid #999;
}

.context .tool.text {
    padding-left: 8px;
}

.context .joined {
    border-right: 0;
}

.context-name {
    padding-left: 6px;
    line-height: 20px;
}

/* workspace */

.workspace {
    flex: 1;
    min-height: 0;
    display: grid;
    grid-template-columns: 499px minmax(0, 1fr);
    gap: 5px;
    padding-bottom: 5px;
}

.side {
    display: grid;
    grid-template-rows: 525px 1fr;
    row-gap: 5px;
    min-height: 0;
    padding-top: 1px;
}

.panel {
    border-right: 1px solid #d6e0f4;
    border-bottom: 1px solid #d6e0f4;
}

.title {
    display: flex;
    justify-content: space-between;
    align-items: center;
    height: 23px;
    margin: 0;
    padding: 0 1px;
    border-bottom: 2px solid #7c7a76;
    background: linear-gradient(90deg, #bfcddd, #cbd8ec 50%, #d8e2f5);
    font-size: 13px;
    font-weight: normal;
}

.title svg {
    display: block;
    width: 10px;
    height: 10px;
}

.filter {
    display: grid;
    grid-template-columns: 41px 102px 146px;
    align-items: center;
    height: 25px;
    padding: 2px 0 0 3px;
    border-left: 2px solid #aaa;
    border-bottom: 1px solid #999;
    background: #f4f5f6;
    font-size: 12px;
}

.filter label {
    padding-left: 3px;
}

.filter input {
    height: 20px;
    background: #f7f9fb;
}

.tree-tools {
    display: flex;
    gap: 8px;
    height: 24px;
    padding-left: 9px;
    border-left: 2px solid #aaa;
    background: #f2f4f6;
}

.tree-tools button {
    width: 16px;
}

.tree-tools svg {
    display: block;
}

.tree {
    margin: 0;
    padding: 0 0 0 5px;
    list-style: none;
    font-family: Roboto, "Noto Sans", sans-serif;
    font-size: 11px;
}

.tree b {
    font-family: "Noto Sans", sans-serif;
    font-size: 12px;
}

.tree li {
    display: flex;
    align-items: center;
    height: 16px;
    white-space: nowrap;
}

.node {
    position: relative;
    height: 16px;
    margin: 0 5px 0 2px;
}

.badge {
    position: absolute;
    left: -9px;
    top: 7px;
    width: 10px;
    height: 10px;
}

.guide {
    display: flex;
    align-items: center;
    width: 27px;
    height: 16px;
    padding-left: 2px;
    background-repeat: no-repeat;
}

.line {
    background-image: repeating-linear-gradient(#777 0 1px, transparent 1px 2px);
    background-size: 1px 16px;
    background-position: 6px 0;
}

.tee, .end {
    background-image: repeating-linear-gradient(#777 0 1px, transparent 1px 2px), repeating-linear-gradient(90deg, #777 0 1px, transparent 1px 2px);
    background-size: 1px 16px, 15px 1px;
    background-position: 6px 0, 6px 8px;
}

.end {
    background-size: 1px 8px, 15px 1px;
}

.toggle {
    display: block;
    width: 9px;
    height: 9px;
    border: 1px solid #777;
    background: linear-gradient(#000, #000) center / 5px 1px no-repeat, #fff;
}

.plus {
    background: linear-gradient(#000, #000) center / 5px 1px no-repeat, linear-gradient(#000, #000) center / 1px 5px no-repeat, #fff;
}

/* details */

.details table {
    width: 498px;
    table-layout: fixed;
    border-collapse: collapse;
    font-size: 12px;
}

.gutter-col {
    width: 12px;
}

.key-col {
    width: 53px;
}

.details th, .details td {
    height: 18px;
    padding: 0 3px;
    border: 1px solid #999;
    text-align: left;
    line-height: 16px;
    white-space: nowrap;
}

.details .gutter {
    padding: 0 1px;
    border-width: 0 1px 0 0;
}

.details .readonly {
    background: #edece9;
}

/* graphics */

.graphics {
    display: flex;
    flex-direction: column;
    min-width: 0;
    min-height: 0;
}

.viewport {
    flex: 1;
    min-height: 0;
    overflow: hidden;
    border-left: 2px solid #6f6e6c;
    border-top: 2px solid #6f6e6c;
    background: linear-gradient(#6b8cdc, #8ea7e5 25%, #a4b6ea 40%, #b4c3ef 51%, #b9c7ee 54%, #c0cdd9 57%, #c3d0de 60%, #cdd9ec 65%, #d8e2f4 74%, #f7f9fb 93%);
}

.scene {
    display: block;
    width: 100%;
    height: 100%;
}

.scale {
    font-size: 12px;
    text-anchor: middle;
}

.views {
    display: flex;
    flex: none;
    height: 17px;
    border-left: 2px solid #6f6e6c;
    border-bottom: 1px solid #000;
    background: #f4f5f6;
    font-size: 11px;
}

.views button {
    border-top: 1px solid #000;
}

.views .active {
    padding: 0 1px;
    border-top: 0;
    background: #f7f9fb;
    font-weight: bold;
}

.slant {
    width: 10px;
    fill: none;
    stroke: #000;
}

.slant.first {
    width: 8px;
    background: #f7f9fb;
}

.rest {
    flex: 1;
    border-top: 1px solid #000;
}

.annotations {
    margin-top: 6px;
}

.annotations .title {
    padding-left: 4px;
}

.grid-head {
    overflow: hidden;
    border-left: 1px solid #6f6e6c;
    background: #f5f6f7;
}

.grid-head table {
    width: 800px;
    table-layout: fixed;
    border-collapse: collapse;
    font-size: 12px;
}

.grid-head th {
    width: 100px;
    height: 20px;
    padding: 0 5px;
    border-right: 1px solid #777;
    text-align: left;
    font-weight: normal;
}

.grid-head .note {
    width: 150px;
}

.grid-head .unit {
    width: 50px;
}

/* status bar */

.status {
    flex: none;
    display: grid;
    grid-template-columns: 514px 247px 208px 1fr;
    gap: 3px;
    height: 22px;
}

.status span {
    display: flex;
    align-items: center;
    gap: 4px;
    padding-left: 1px;
    border-top: 1px solid #999;
    border-left: 1px solid #999;
    background: #f2f4f6;
}
```
